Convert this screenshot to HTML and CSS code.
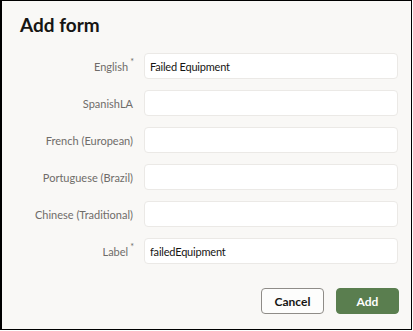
FILE: index.html
```html
<!DOCTYPE html>
<html lang="en">
<head>
    <meta charset="UTF-8">
    <meta name="viewport" content="width=device-width, initial-scale=1.0">
    <title>Add form</title>

    <link rel="stylesheet" href="styles.css">
</head>

<body>
    <div class="dialog">
        <h1 class="title">Add form</h1>

        <div class="fields">
            <label class="fieldLabel">English<span class="req">*</span></label>
            <input class="fieldInput" type="text" value="Failed Equipment">

            <label class="fieldLabel">SpanishLA</label>
            <input class="fieldInput" type="text" value="">

            <label class="fieldLabel">French (European)</label>
            <input class="fieldInput" type="text" value="">

            <label class="fieldLabel">Portuguese (Brazil)</label>
            <input class="fieldInput" type="text" value="">

            <label class="fieldLabel">Chinese (Traditional)</label>
            <input class="fieldInput" type="text" value="">

            <label class="fieldLabel">Label<span class="req">*</span></label>
            <input class="fieldInput" type="text" value="failedEquipment">
        </div>

        <div class="footer">
            <button type="button" class="btn cancelButton">Cancel</button>
            <button type="button" class="btn addButton">Add</button>
        </div>
    </div>
</body>

</html>
```

FILE: styles.css
```css
    * {
        margin: 0;
        padding: 0;
        box-sizing: border-box;
    }
    body {
        background-color: white;
        font-family: Lato, "Open Sans", sans-serif;
    }
    .dialog {
        width: 412px;
        height: 330px;
        background-color: #f9f8f6;
        border: 1px solid black;
        border-left-width: 2px;
        display: flex;
        flex-direction: column;
    }
    .title {
        font-size: 19px;
        font-weight: bold;
        line-height: 24px;
        color: #161513;
        padding-top: 12px;
        padding-left: 18px;
    }
    .fields {
        display: grid;
        grid-template-columns: 131px 254px;
        column-gap: 11px;
        row-gap: 11px;
        padding-top: 16px;
    }
    .fieldLabel {
        font-size: 11px;
        color: #6f6c69;
        text-align: right;
        align-self: center;
    }
    .req {
        font-size: 9px;
        position: relative;
        top: -6px;
        margin-left: 2px;
    }
    .fieldLabel:has(.req) {
        margin-right: -1px;
    }
    .fieldInput {
        height: 26px;
        background-color: white;
        border: 1px solid #ebe9e6;
        border-radius: 4px;
        padding-left: 5px;
        font-family: Lato, "Open Sans", sans-serif;
        font-size: 11px;
        letter-spacing: -0.2px;
        color: #161513;
        outline: none;
    }
    .footer {
        display: flex;
        justify-content: flex-end;
        gap: 12px;
        padding-top: 24px;
        padding-right: 12px;
    }
    .btn {
        width: 63px;
        height: 26px;
        border-radius: 4px;
        font-family: Lato, "Open Sans", sans-serif;
        font-size: 12px;
        font-weight: bold;
    }
    .cancelButton {
        background-color: #fdfdfc;
        border: 1px solid #8f8c88;
        color: #161513;
    }
    .addButton {
        background-color: #5a7e4f;
        border: 1px solid #5a7e4f;
        color: white;
    }
```
